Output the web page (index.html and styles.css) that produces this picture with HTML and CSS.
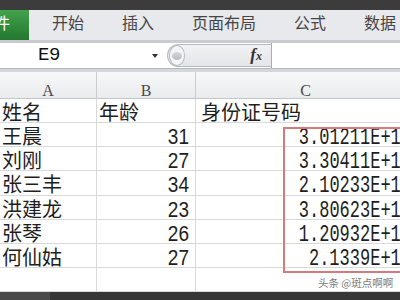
FILE: index.html
```html
<!DOCTYPE html>
<html lang="zh-CN">
<head>
<meta charset="utf-8">
<title>Excel</title>
<link rel="stylesheet" href="styles.css">
</head>
<body>
<div class="app">
  <div class="topbar"></div>
  <div class="ribbon">
    <div class="file-tab"><span>文件</span></div>
    <div class="tabs">
      <span class="tab">开始</span>
      <span class="tab">插入</span>
      <span class="tab">页面布局</span>
      <span class="tab">公式</span>
      <span class="tab">数据</span>
    </div>
  </div>
  <div class="formula-row">
    <div class="namebox"><span class="ref">E9</span><span class="caret"></span></div>
    <div class="fx-pill"><span class="knob"><span class="knob-in"></span></span><span class="fx">f<span class="fx-x">x</span></span></div>
    <div class="input"></div>
  </div>
  <div class="divider"></div>
  <div class="sheet">
    <div class="hd">A</div><div class="hd">B</div><div class="hd">C</div>

    <div class="cell">姓名</div><div class="cell">年龄</div><div class="cell cpad">身份证号码</div>
    <div class="cell">王晨</div><div class="cell num"><span class="tall-b">31</span></div><div class="cell id"><span class="tall-c">3.01211E+17</span></div>
    <div class="cell">刘刚</div><div class="cell num"><span class="tall-b">27</span></div><div class="cell id"><span class="tall-c">3.30411E+17</span></div>
    <div class="cell">张三丰</div><div class="cell num"><span class="tall-b">34</span></div><div class="cell id"><span class="tall-c">2.10233E+17</span></div>
    <div class="cell">洪建龙</div><div class="cell num"><span class="tall-b">23</span></div><div class="cell id"><span class="tall-c">3.80623E+17</span></div>
    <div class="cell">张琴</div><div class="cell num"><span class="tall-b">26</span></div><div class="cell id"><span class="tall-c">1.20932E+17</span></div>
    <div class="cell">何仙姑</div><div class="cell num"><span class="tall-b">27</span></div><div class="cell id"><span class="tall-c">2.1339E+17</span></div>
    <div class="cell"></div><div class="cell"></div><div class="cell"></div>
  </div>
  <div class="bottombar"><span class="seg"></span></div>
  <div class="highlight"></div>
  <div class="watermark">头条 @斑点啊啊</div>
</div>
</body>
</html>
```
FILE: styles.css
```css
* { box-sizing: border-box; }
html, body { margin: 0; padding: 0; }
body {
  width: 400px;
  height: 300px;
  overflow: hidden;
  background: #fff;
  font-family: "Noto Sans CJK SC", "Noto Sans", sans-serif;
}
.app {
  position: relative;
  width: 400px;
  height: 300px;
  overflow: hidden;
  display: flex;
  flex-direction: column;
}
.topbar {
  height: 10px;
  flex: none;
  background: #3c3c3c;
}
.ribbon {
  height: 33px;
  flex: none;
  display: flex;
  background: #e7e9ec;
  border-bottom: 3px solid #c8cbd0;
}
.file-tab {
  width: 29px;
  flex: none;
  overflow: hidden;
  display: flex;
  justify-content: flex-end;
  padding-right: 19px;
  padding-top: 3px;
  background: linear-gradient(#43a24d, #22782f);
  color: #fff;
  font-size: 16px;
  line-height: 18px;
}
.file-tab span { flex: none; white-space: nowrap; }
.tabs {
  display: flex;
  gap: 38px;
  margin-left: 23px;
  padding-top: 3px;
  font-size: 16px;
  line-height: 18px;
  color: #454545;
}
.tab { white-space: nowrap; }

.formula-row {
  height: 25px;
  flex: none;
  display: flex;
  background: #fff;
}
.namebox {
  width: 167px;
  flex: none;
  display: flex;
  align-items: center;
  padding-left: 38px;
}
.ref {
  font-family: "Liberation Mono", monospace;
  font-size: 19px;
  letter-spacing: -0.4px;
  color: #111;
  line-height: 19px;
}
.caret {
  margin-left: auto;
  margin-right: 9px;
  width: 0;
  height: 0;
  border-left: 3px solid transparent;
  border-right: 3px solid transparent;
  border-top: 4px solid #333;
}
.fx-pill {
  width: 104px;
  flex: none;
  display: flex;
  align-items: center;
  margin: 1px 0;
  background: linear-gradient(#f1f2f4, #e3e5e8);
  border: 1px solid #b6bac0;
  border-right: none;
  border-radius: 12px 0 0 12px;
}
.knob {
  width: 16px;
  height: 21px;
  margin-left: 1px;
  border-radius: 50%;
  border: 1px solid #b9bdc2;
  background: #f4f5f7;
  display: flex;
  align-items: center;
  justify-content: center;
}
.knob-in {
  width: 10px;
  height: 8px;
  border-radius: 50%;
  background: linear-gradient(#d3d6da, #b8bcc1);
}
.fx {
  margin-left: auto;
  margin-right: 9px;
  font-family: "Liberation Serif", serif;
  font-style: italic;
  font-weight: bold;
  font-size: 17px;
  color: #333;
  line-height: 17px;
}
.fx-x { font-size: 12px; }
.input {
  flex: 1;
  background: #fff;
  border-left: 1px solid #a9adb3;
}
.divider {
  height: 4px;
  flex: none;
  background: #d3d6da;
  border-top: 1px solid #b5b9be;
}

.sheet {
  flex: none;
  width: 416px;
  display: grid;
  grid-template-columns: 97px 99px 220px;
  grid-template-rows: 27px repeat(8, 24.125px);
}
.hd {
  background: linear-gradient(#f7f8f9, #eaebed);
  border-right: 1px solid #c9cbcf;
  border-bottom: 1px solid #c3c5c9;
  text-align: center;
  font-family: "Liberation Serif", serif;
  font-size: 16px;
  line-height: 16px;
  padding-top: 11px;
  color: #4a4a4a;
}
.cell {
  border-right: 1px solid #d9d9d9;
  border-bottom: 1px solid #d9d9d9;
  font-size: 20px;
  line-height: 22px;
  padding: 2px 0 0 2px;
  color: #1e1e1e;
  white-space: nowrap;
  overflow: hidden;
}
.cpad { padding-left: 5px; }
.num {
  text-align: right;
  padding: 7px 6px 0 0;
  font-family: "Liberation Sans", sans-serif;
  font-size: 19px;
  line-height: 16px;
  overflow: visible;
}
.tall-b {
  display: inline-block;
  transform: scaleY(1.17);
  transform-origin: 50% 14.3px;
}
.id {
  text-align: right;
  padding: 11px 4px 0 0;
  font-family: "Liberation Mono", monospace;
  font-size: 17px;
  line-height: 12px;
  overflow: visible;
}
.tall-c {
  display: inline-block;
  transform: scaleY(1.4);
  transform-origin: 50% 10.5px;
}
.bottombar {
  flex: none;
  height: 8px;
  background: #363636;
  display: flex;
}
.seg {
  width: 50px;
  background: #4a4a4a;
}
.highlight {
  position: absolute;
  left: 283px;
  top: 127px;
  width: 130px;
  height: 146px;
  border: 2px solid #d47a7c;
}
.watermark {
  position: absolute;
  left: 318px;
  top: 277px;
  font-size: 10.5px;
  line-height: 12px;
  color: #7a7a7a;
  white-space: nowrap;
}
```
